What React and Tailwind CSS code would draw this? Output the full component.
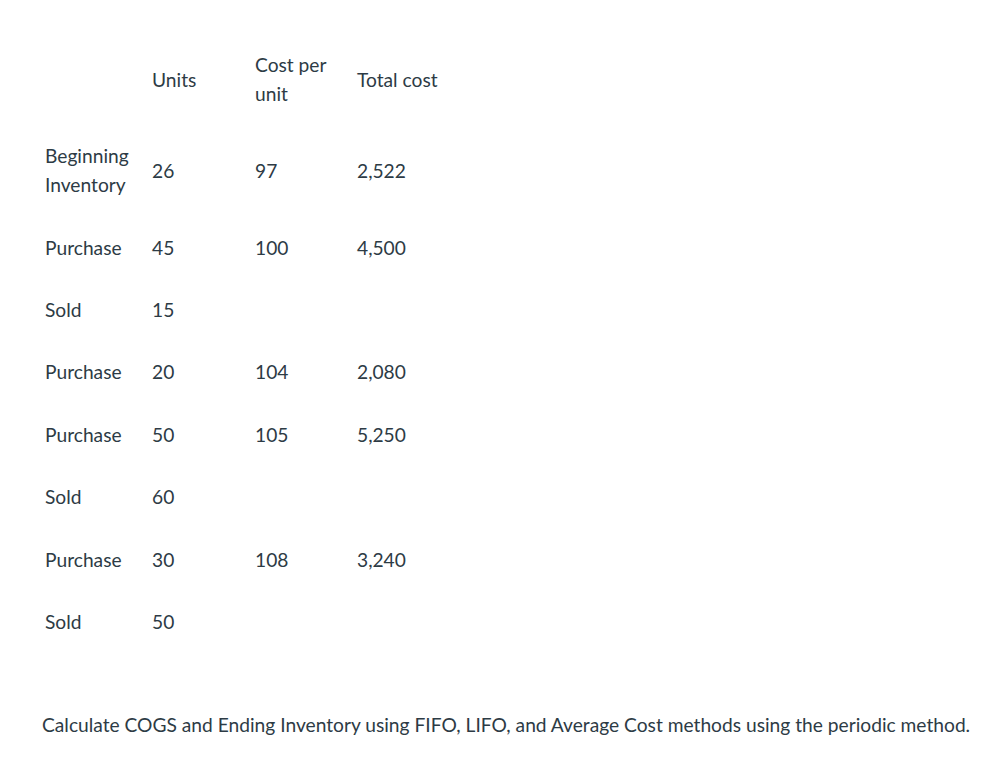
import React from 'react';

const rows = [
	{ label: ['Beginning', 'Inventory'], units: '26', cost: '97', total: '2,522' },
	{ label: ['Purchase'], units: '45', cost: '100', total: '4,500' },
	{ label: ['Sold'], units: '15', cost: '', total: '' },
	{ label: ['Purchase'], units: '20', cost: '104', total: '2,080' },
	{ label: ['Purchase'], units: '50', cost: '105', total: '5,250' },
	{ label: ['Sold'], units: '60', cost: '', total: '' },
	{ label: ['Purchase'], units: '30', cost: '108', total: '3,240' },
	{ label: ['Sold'], units: '50', cost: '', total: '' },
];

function Cell( { children, className = '' } ) {
	return (
		<td className={ `py-[16.8px] pl-[3px] pr-0 align-middle ${ className }` }>
			{ children }
		</td>
	);
}

export default function App() {
	return (
		<div
			className="min-h-screen bg-white text-[#2d3b45] text-[19.2px] leading-[28.8px] pl-[42px] pt-[34.5px]"
			style={ { fontFamily: 'Lato, "Open Sans", sans-serif' } }
		>
			<table className="border-collapse">
				<colgroup>
					<col className="w-[107px]" />
					<col className="w-[103px]" />
					<col className="w-[102px]" />
					<col className="w-[110px]" />
				</colgroup>
				<tbody>
					<tr>
						<Cell />
						<Cell>Units</Cell>
						<Cell>
							Cost per
							<br />
							unit
						</Cell>
						<Cell>Total cost</Cell>
					</tr>
					{ rows.map( ( row, i ) => (
						<tr key={ i }>
							<Cell>
								{ row.label.map( ( line, j ) => (
									<div key={ j }>{ line }</div>
								) ) }
							</Cell>
							<Cell>{ row.units }</Cell>
							<Cell>{ row.cost }</Cell>
							<Cell>{ row.total }</Cell>
						</tr>
					) ) }
				</tbody>
			</table>
			<p className="mt-[57.5px]">
				Calculate COGS and Ending Inventory using FIFO, LIFO, and Average Cost
				methods using the periodic method.
			</p>
		</div>
	);
}
